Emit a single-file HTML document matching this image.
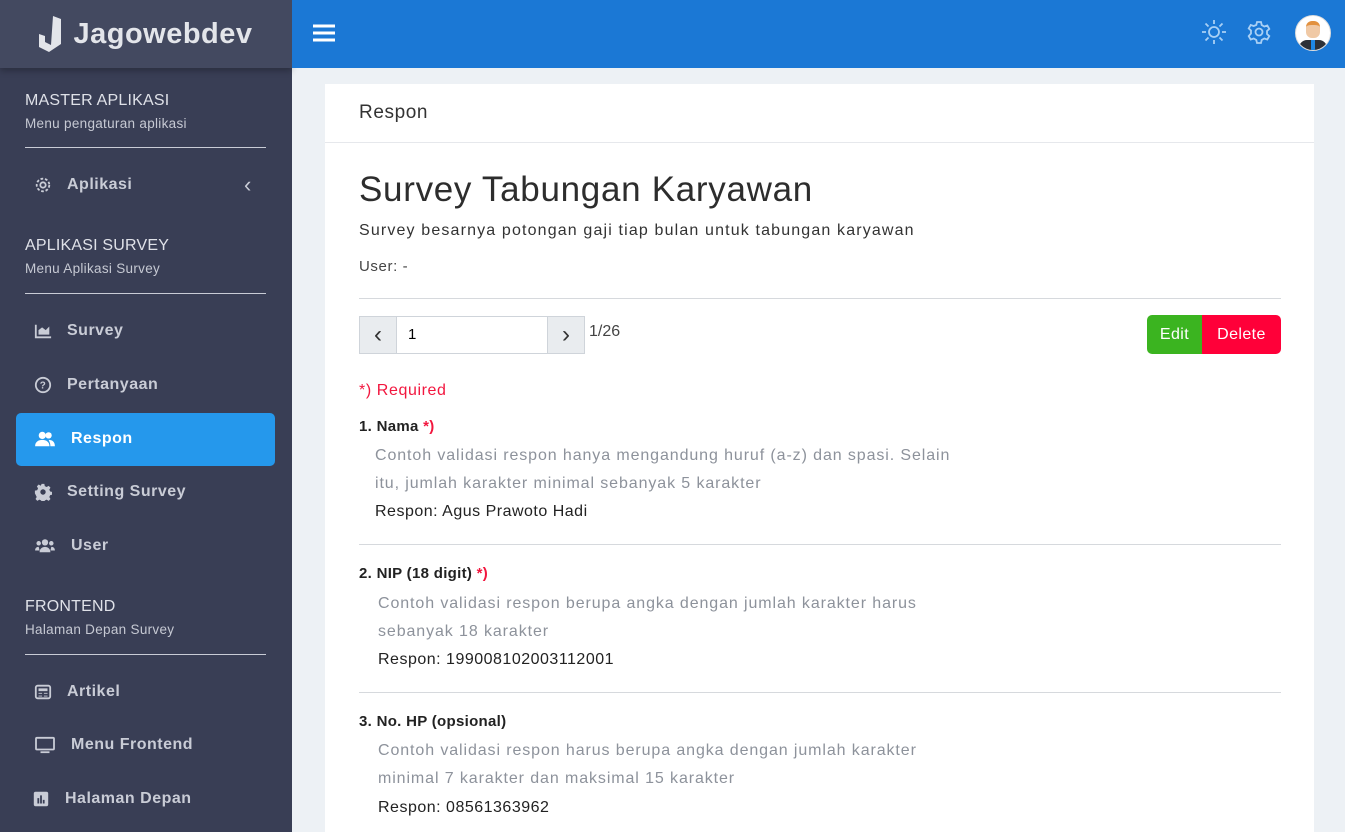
<!DOCTYPE html>
<html><head><meta charset="utf-8"><style>
*{box-sizing:border-box;margin:0;padding:0}
html,body{width:1345px;height:832px;overflow:hidden}
body{font-family:"Liberation Sans",sans-serif;background:#edf1f5;position:relative}
.side{position:absolute;left:0;top:0;width:292px;height:832px;background:#393e55}
.logo{height:68px;background:#434960;display:flex;align-items:center;justify-content:center;color:#e3e5ea;font-weight:bold;font-size:29px;gap:8px;box-shadow:0 3px 6px rgba(0,0,0,.25);letter-spacing:.5px}
.a{position:absolute;white-space:nowrap}
.sh{left:25px;font-size:16px;color:#dfe1e8;letter-spacing:.2px}
.ss{left:25px;font-size:13.5px;color:#c6c9d3;letter-spacing:.3px}
.hr{left:25px;width:241px;border-top:1px solid #c9ccd6}
.item{left:34px;display:flex;align-items:center;color:#c9ccd6;font-size:16px;font-weight:bold;letter-spacing:.5px;height:20px}
.item svg{width:18px;height:18px;margin-right:15px;fill:#c9ccd6}
.top{position:absolute;left:292px;top:0;right:0;height:68px;background:#1b78d5}
.card{position:absolute;left:325px;top:84px;width:989px;height:748px;background:#fff}
.c{left:34px;letter-spacing:.6px}
.gray{color:#8d929b}
.q{font-weight:bold;font-size:15px;color:#222;letter-spacing:.3px}
.red{color:#f2163e}
.desc{color:#8d929b;font-size:16px;line-height:27.5px;width:590px;white-space:normal;letter-spacing:.9px}
.resp{font-size:16px;color:#222;letter-spacing:.5px}
.line{left:34px;width:922px;border-top:1px solid #d6d9dd}
</style></head><body>
<div class="side">
 <div class="logo"><svg width="26" height="36" viewBox="0 0 26 36"><path d="M14 0l8 3v25l-12 8-10-5V18l6 2v6l6 3z" fill="#e3e5ea"/></svg>Jagowebdev</div>
 <div class="a sh" style="top:92px">MASTER APLIKASI</div>
 <div class="a ss" style="top:116px">Menu pengaturan aplikasi</div>
 <div class="a hr" style="top:147px"></div>
 <div class="a item" style="top:175px"><svg viewBox="0 0 20 20"><circle cx="10" cy="10" r="7" fill="none" stroke="#c9ccd6" stroke-width="2" stroke-dasharray="3 2"/><circle cx="10" cy="10" r="3" fill="none" stroke="#c9ccd6" stroke-width="2"/></svg>Aplikasi</div>
 <div class="a" style="left:244px;top:172px;color:#c9ccd6;font-size:22px">‹</div>
 <div class="a sh" style="top:237px">APLIKASI SURVEY</div>
 <div class="a ss" style="top:261px">Menu Aplikasi Survey</div>
 <div class="a hr" style="top:293px"></div>
 <div class="a item" style="top:321px"><svg viewBox="0 0 20 20"><path d="M1 3h2v13h16v2H1zM5 14V9l4-3 4 3 4-4v9z"/></svg>Survey</div>
 <div class="a item" style="top:375px"><svg viewBox="0 0 20 20"><circle cx="10" cy="10" r="8" fill="none" stroke="#c9ccd6" stroke-width="2"/><text x="10" y="14" font-size="11" text-anchor="middle" fill="#c9ccd6" font-weight="bold">?</text></svg>Pertanyaan</div>
 <div class="a" style="left:16px;top:413px;width:259px;height:53px;background:#2598ec;border-radius:5px"></div>
 <div class="a item" style="top:429px;color:#fff"><svg viewBox="0 0 22 20" style="width:22px;fill:#fff"><circle cx="8" cy="6" r="4"/><circle cx="15" cy="6" r="3.5"/><path d="M0 18c0-5 4-7 8-7s8 2 8 7zM15 11c4 0 7 2 7 7h-5c0-3-1-5-2-7z"/></svg>Respon</div>
 <div class="a item" style="top:482px"><svg viewBox="0 0 20 20"><path d="M8.5 1h3l.5 2.5 2 1 2.3-1.3 2 2-1.3 2.3 1 2 2.5.5v3l-2.5.5-1 2 1.3 2.3-2 2-2.3-1.3-2 1-.5 2.5h-3l-.5-2.5-2-1-2.3 1.3-2-2 1.3-2.3-1-2L1 11.5v-3l2.5-.5 1-2-1.3-2.3 2-2L7.5 3z"/><circle cx="10" cy="10" r="3" fill="#393e55"/></svg>Setting Survey</div>
 <div class="a item" style="top:536px"><svg viewBox="0 0 22 20" style="width:22px"><circle cx="11" cy="6" r="3.5"/><circle cx="4" cy="7" r="2.5"/><circle cx="18" cy="7" r="2.5"/><path d="M5 17c0-4 3-6 6-6s6 2 6 6zM0 15c0-3 2-4 4-4l1 4zM22 15c0-3-2-4-4-4l-1 4z"/></svg>User</div>
 <div class="a sh" style="top:598px">FRONTEND</div>
 <div class="a ss" style="top:622px">Halaman Depan Survey</div>
 <div class="a hr" style="top:654px"></div>
 <div class="a item" style="top:682px"><svg viewBox="0 0 20 20"><rect x="2" y="3" width="16" height="14" rx="2" fill="none" stroke="#c9ccd6" stroke-width="2"/><path d="M5 6h10v3H5zM5 11h4v1H5zM11 11h4v1h-4zM5 14h4v1H5zM11 14h4v1h-4z"/></svg>Artikel</div>
 <div class="a item" style="top:735px"><svg viewBox="0 0 22 20" style="width:22px"><rect x="1" y="2" width="20" height="13" rx="1" fill="none" stroke="#c9ccd6" stroke-width="2"/><path d="M6 17h10v2H6z"/></svg>Menu Frontend</div>
 <div class="a item" style="top:789px;left:32px"><svg viewBox="0 0 20 20"><rect x="2" y="2" width="16" height="16" rx="2"/><path d="M6 9h2v6H6zM9 6h2v9H9zM12 11h2v4h-2z" fill="#393e55"/></svg>Halaman Depan</div>
</div>
<div class="top">
 <svg style="position:absolute;left:21px;top:24px" width="22" height="18"><path d="M0 2h22M0 9h22M0 16h22" stroke="#fff" stroke-width="3"/></svg>
 <svg style="position:absolute;left:909px;top:19px" width="26" height="26" viewBox="0 0 26 26" fill="none" stroke="#a9d0f5" stroke-width="1.8"><circle cx="13" cy="13" r="5"/><path d="M13 1v4M13 21v4M1 13h4M21 13h4M4.5 4.5l3 3M18.5 18.5l3 3M4.5 21.5l3-3M18.5 7.5l3-3"/></svg>
 <svg style="position:absolute;left:955px;top:20px" width="24" height="24" viewBox="0 0 24 24" fill="none" stroke="#a9d0f5" stroke-width="1.8"><circle cx="12" cy="12" r="3.5"/><path d="M10 2h4l.7 3 2.6 1.5 3-1 2 3.4-2.3 2.1v3l2.3 2.1-2 3.4-3-1-2.6 1.5-.7 3h-4l-.7-3-2.6-1.5-3 1-2-3.4L4 13.5v-3L1.7 8.4l2-3.4 3 1L9.3 5z"/></svg>
 <div style="position:absolute;left:1003px;top:15px;width:36px;height:36px;border-radius:50%;background:#fff;overflow:hidden;border:1px solid #ddd"><div style="position:absolute;left:10px;top:5px;width:14px;height:17px;border-radius:6px;background:#f0c9a5;border-top:4px solid #e2913f"></div><div style="position:absolute;left:3px;top:24px;width:28px;height:14px;background:#2d3138;border-radius:8px 8px 0 0"></div><div style="position:absolute;left:15px;top:24px;width:4px;height:12px;background:#1e88e5"></div></div>
</div>
<div class="card">
 <div class="a" style="left:0;top:0;width:989px;height:59px;border-bottom:1px solid #e6e8ec"></div>
 <div class="a c" style="top:18px;font-size:19px;color:#333">Respon</div>
 <div class="a c" style="top:86px;font-size:35px;color:#2d2d2d;letter-spacing:.7px">Survey Tabungan Karyawan</div>
 <div class="a c" style="top:138px;font-size:16px;color:#333;letter-spacing:1.15px">Survey besarnya potongan gaji tiap bulan untuk tabungan karyawan</div>
 <div class="a c" style="top:174px;font-size:15px;color:#444">User: -</div>
 <div class="a line" style="top:214px"></div>
 <div class="a" style="top:232px;left:34px;display:flex;height:38px;border:1px solid #cfd4da">
  <div style="width:36px;background:#e9ecef;display:flex;align-items:center;justify-content:center;font-size:24px;color:#333">‹</div>
  <div style="width:152px;border-left:1px solid #cfd4da;border-right:1px solid #cfd4da;padding:9px 11px;font-size:15px">1</div>
  <div style="width:36px;background:#e9ecef;display:flex;align-items:center;justify-content:center;font-size:24px;color:#333">›</div>
 </div>
 <div class="a" style="left:264px;top:239px;font-size:16px;color:#444">1/26</div>
 <div class="a" style="left:822px;top:231px;display:flex;height:39px;border-radius:5px;overflow:hidden;color:#fff;font-size:16px;letter-spacing:.4px">
  <div style="background:#3bb420;width:55px;display:flex;align-items:center;justify-content:center">Edit</div>
  <div style="background:#ff0039;width:79px;display:flex;align-items:center;justify-content:center">Delete</div>
 </div>
 <div class="a c red" style="top:298px;font-size:16px">*) Required</div>
 <div class="a c q" style="top:334px">1. Nama <span class="red">*)</span></div>
 <div class="a c desc" style="left:50px;top:358px">Contoh validasi respon hanya mengandung huruf (a-z) dan spasi. Selain itu, jumlah karakter minimal sebanyak 5 karakter</div>
 <div class="a c resp" style="left:50px;top:419px">Respon: Agus Prawoto Hadi</div>
 <div class="a line" style="top:460px"></div>
 <div class="a c q" style="top:481px">2. NIP (18 digit) <span class="red">*)</span></div>
 <div class="a c desc" style="left:53px;top:506px;width:570px">Contoh validasi respon berupa angka dengan jumlah karakter harus sebanyak 18 karakter</div>
 <div class="a c resp" style="left:53px;top:567px">Respon: 199008102003112001</div>
 <div class="a line" style="top:608px"></div>
 <div class="a c q" style="top:629px">3. No. HP (opsional)</div>
 <div class="a c desc" style="left:53px;top:653px;width:570px">Contoh validasi respon harus berupa angka dengan jumlah karakter minimal 7 karakter dan maksimal 15 karakter</div>
 <div class="a c resp" style="left:53px;top:715px">Respon: 08561363962</div>
</div>
</body></html>
